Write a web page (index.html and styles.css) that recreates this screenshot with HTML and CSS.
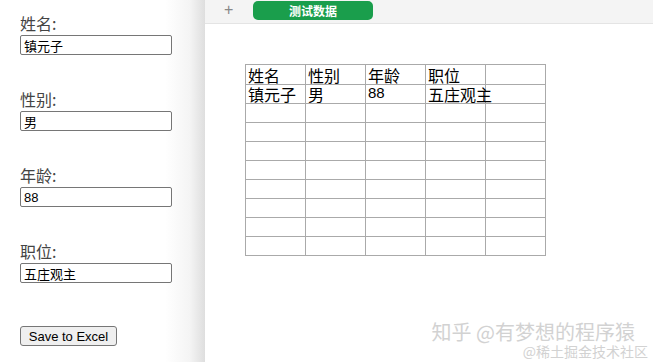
FILE: index.html
```html
<!DOCTYPE html>
<html lang="zh">
<head>
  <meta charset="UTF-8">
  <meta name="viewport" content="width=device-width, initial-scale=1.0">
  <title>导出Excel</title>
  <link rel="stylesheet" href="styles.css">
</head>
<body>
  <div class="form-panel">
    <div class="field">
      <label>姓名:</label>
      <input type="text" value="镇元子">
    </div>
    <div class="field">
      <label>性别:</label>
      <input type="text" value="男">
    </div>
    <div class="field">
      <label>年龄:</label>
      <input type="text" value="88">
    </div>
    <div class="field">
      <label>职位:</label>
      <input type="text" value="五庄观主">
    </div>
    <button class="save-btn">Save to Excel</button>
  </div>

  <div class="sheet">
    <div class="sheet-bar">
      <span class="add-sheet">+</span>
      <span class="sheet-tab">测试数据</span>
    </div>
    <div class="sheet-body">
      <table class="grid">
        <colgroup>
          <col><col><col><col><col>
        </colgroup>
        <tr class="head"><td>姓名</td><td>性别</td><td>年龄</td><td>职位</td><td></td></tr>
        <tr><td>镇元子</td><td>男</td><td class="num">88</td><td>五庄观主</td><td></td></tr>
        <tr><td></td><td></td><td></td><td></td><td></td></tr>
        <tr><td></td><td></td><td></td><td></td><td></td></tr>
        <tr><td></td><td></td><td></td><td></td><td></td></tr>
        <tr><td></td><td></td><td></td><td></td><td></td></tr>
        <tr><td></td><td></td><td></td><td></td><td></td></tr>
        <tr><td></td><td></td><td></td><td></td><td></td></tr>
        <tr><td></td><td></td><td></td><td></td><td></td></tr>
        <tr><td></td><td></td><td></td><td></td><td></td></tr>
      </table>
    </div>
  </div>

  <div class="watermark">
    <div class="wm-main">知乎 @有梦想的程序猿</div>
    <div class="wm-sub">@稀土掘金技术社区</div>
  </div>
</body>
</html>
```

FILE: styles.css
```css
body {
  margin: 0;
  display: flex;
  height: 362px;
  overflow: hidden;
  font-family: "Noto Sans CJK SC", sans-serif;
  background: #fff;
}
.form-panel {
  width: 205px;
  flex: none;
  box-sizing: border-box;
  padding: 13px 0 0 20px;
  background: linear-gradient(to right, #fff 0, #fff 165px, #f4f4f4 190px, #dedede 205px);
}
.field {
  margin-bottom: 34px;
}
.field label {
  display: block;
  font-size: 16px;
  line-height: 20px;
  color: #444;
  margin-bottom: 2px;
}
.field input {
  display: block;
  width: 152px;
  height: 20px;
  box-sizing: border-box;
  border: 1px solid #767676;
  border-radius: 2px;
  padding: 0 3px;
  font: 13px/18px "Liberation Sans", "Noto Sans CJK SC", sans-serif;
  color: #000;
}
.save-btn {
  margin-top: 9px;
  width: 97px;
  height: 20px;
  padding: 0;
  border: 1px solid #767676;
  border-radius: 3px;
  background: #efefef;
  font: 13px "Liberation Sans", sans-serif;
  color: #000;
}
.sheet {
  flex: 1;
  display: flex;
  flex-direction: column;
}
.sheet-bar {
  height: 24px;
  flex: none;
  background: #f4f4f4;
  border-bottom: 1px solid #e4e4e4;
  display: flex;
  align-items: flex-start;
  box-sizing: border-box;
}
.add-sheet {
  margin: 1px 0 0 19px;
  width: 12px;
  font: 16px/18px "Liberation Sans", sans-serif;
  color: #888;
}
.sheet-tab {
  margin: 1px 0 0 17px;
  width: 120px;
  height: 19px;
  border-radius: 5px;
  background: #1a9e4c;
  color: #fff;
  font-size: 12px;
  font-weight: bold;
  line-height: 19px;
  text-align: center;
}
.sheet-body {
  padding: 40px 0 0 40px;
}
.grid {
  border-collapse: collapse;
  table-layout: fixed;
  width: 301px;
}
.grid col {
  width: 60px;
}
.grid td {
  height: 19px;
  padding: 0 0 0 2px;
  box-sizing: border-box;
  border: 1px solid #aaa;
  font-size: 16px;
  line-height: 17px;
  vertical-align: bottom;
  color: #000;
  white-space: nowrap;
  overflow: visible;
}
.grid tr.head td {
  height: 20px;
}
.grid td.num {
  font-family: "Liberation Sans", sans-serif;
  font-size: 15px;
  line-height: 15px;
  vertical-align: top;
}
.watermark {
  position: absolute;
  right: 5px;
  bottom: 2px;
  text-align: right;
  color: #d2d2d2;
  pointer-events: none;
}
.wm-main {
  font-size: 20px;
  line-height: 22px;
  margin-right: 13px;
}
.wm-sub {
  font-size: 14px;
  line-height: 17px;
}
```
